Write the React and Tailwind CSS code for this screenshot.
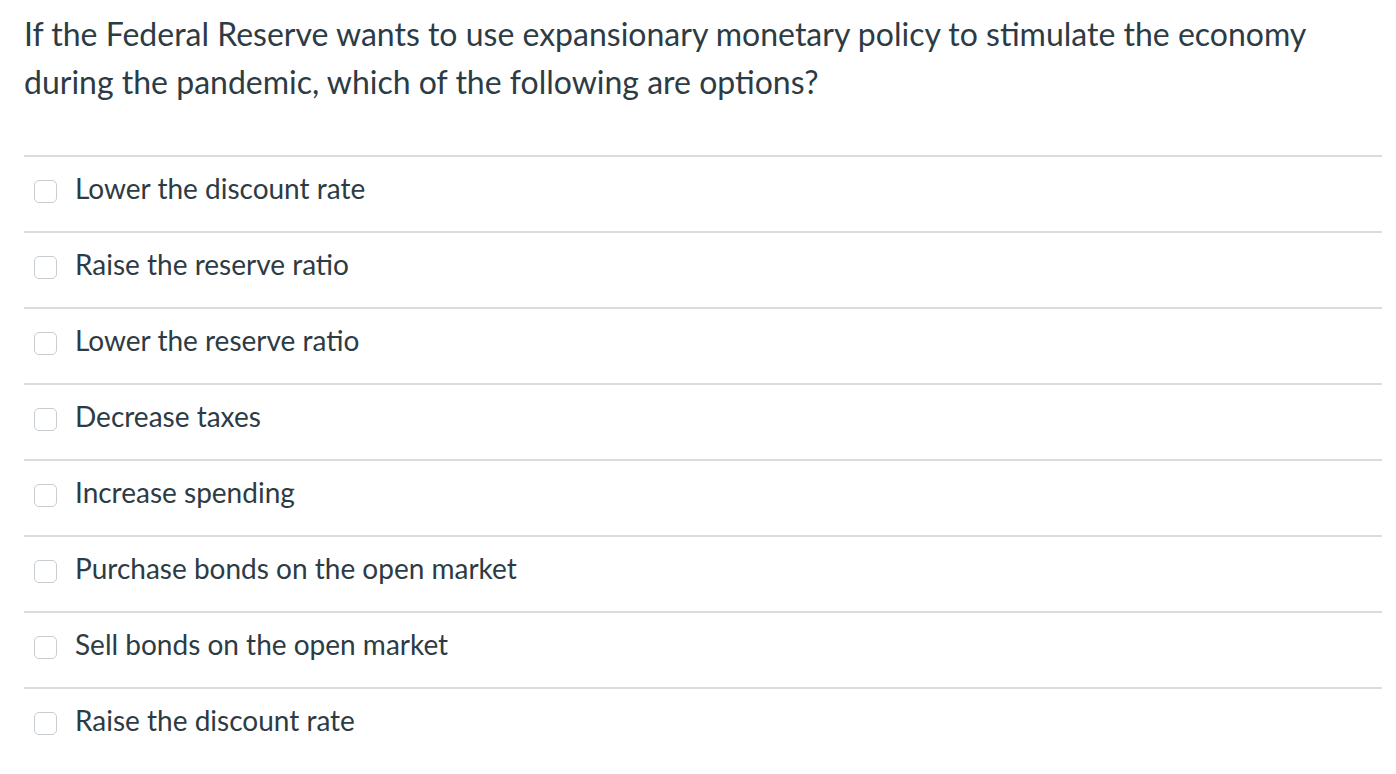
import React from 'react';

const options = [
  'Lower the discount rate',
  'Raise the reserve ratio',
  'Lower the reserve ratio',
  'Decrease taxes',
  'Increase spending',
  'Purchase bonds on the open market',
  'Sell bonds on the open market',
  'Raise the discount rate',
];

export default function App() {
  return (
    <div className="min-h-screen bg-white text-[#2d3b45] font-['Lato',sans-serif]">
      <div className="pl-[24px] pr-[14px] pt-[10px]">
        <p className="text-[32px] leading-[48px] pb-[49px]">
          If the Federal Reserve wants to use expansionary monetary policy to stimulate the economy during the pandemic, which of the following are options?
        </p>
        <div>
          {options.map((opt) => (
            <label
              key={opt}
              className="flex items-start h-[76px] border-t-2 border-[#dcdcdc] pl-[10px]"
            >
              <span className="mt-[23px] w-[23px] h-[23px] rounded-[5px] border border-[#c7cdd1] bg-white shrink-0" />
              <span className="mt-[14px] ml-[18px] text-[28px] leading-[34px]">{opt}</span>
            </label>
          ))}
        </div>
      </div>
    </div>
  );
}
